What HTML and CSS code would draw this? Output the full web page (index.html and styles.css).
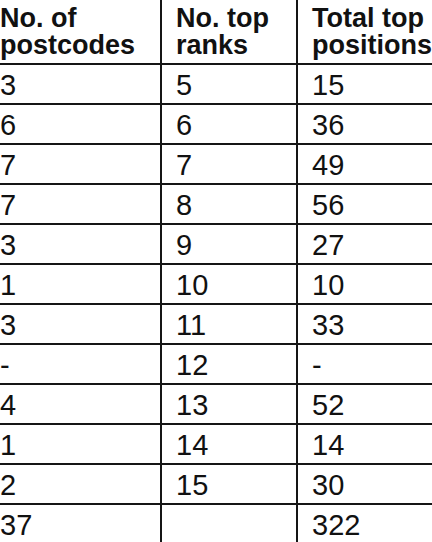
FILE: index.html
```html
<!DOCTYPE html>
<html>
<head>
<meta charset="utf-8">
<link rel="stylesheet" href="styles.css">
</head>
<body>
<table class="ranks">
  <colgroup>
    <col class="c1"><col class="c2"><col class="c3">
  </colgroup>
  <thead>
    <tr>
      <th><span class="hl">No. of</span><span class="hl">postcodes</span></th>
      <th><span class="hl">No. top</span><span class="hl">ranks</span></th>
      <th><span class="hl">Total top</span><span class="hl">positions</span></th>
    </tr>
  </thead>
  <tbody>
    <tr><td>3</td><td>5</td><td>15</td></tr>
    <tr><td>6</td><td>6</td><td>36</td></tr>
    <tr><td>7</td><td>7</td><td>49</td></tr>
    <tr><td>7</td><td>8</td><td>56</td></tr>
    <tr><td>3</td><td>9</td><td>27</td></tr>
    <tr><td>1</td><td>10</td><td>10</td></tr>
    <tr><td>3</td><td>11</td><td>33</td></tr>
    <tr><td>-</td><td>12</td><td>-</td></tr>
    <tr><td>4</td><td>13</td><td>52</td></tr>
    <tr><td>1</td><td>14</td><td>14</td></tr>
    <tr><td>2</td><td>15</td><td>30</td></tr>
    <tr><td>37</td><td></td><td>322</td></tr>
  </tbody>
</table>
</body>
</html>
```
FILE: styles.css
```css
html, body {
  margin: 0;
  padding: 0;
  background: #ffffff;
  overflow: hidden;
}
.ranks {
  border-collapse: collapse;
  table-layout: fixed;
  width: 447px;
  margin-left: -14px;
  font-family: "Liberation Sans", Arial, sans-serif;
  color: #111111;
}
.c1 { width: 175px; }
.c2 { width: 136px; }
.c3 { width: 136px; }
.ranks th,
.ranks td {
  text-align: left;
  vertical-align: top;
  padding: 0 0 0 14px;
  white-space: nowrap;
  overflow: hidden;
  border-bottom: 2px solid #151515;
}
.ranks th + th,
.ranks td + td {
  border-left: 2px solid #151515;
}
.ranks th {
  font-weight: bold;
  font-size: 27px;
  line-height: 27px;
  padding-top: 5px;
  padding-bottom: 4px;
  height: 54px;
}
.hl {
  display: block;
  height: 27px;
}
.ranks td {
  font-size: 29px;
  line-height: 30px;
  padding-top: 5px;
  padding-bottom: 3px;
  height: 30px;
}
```
